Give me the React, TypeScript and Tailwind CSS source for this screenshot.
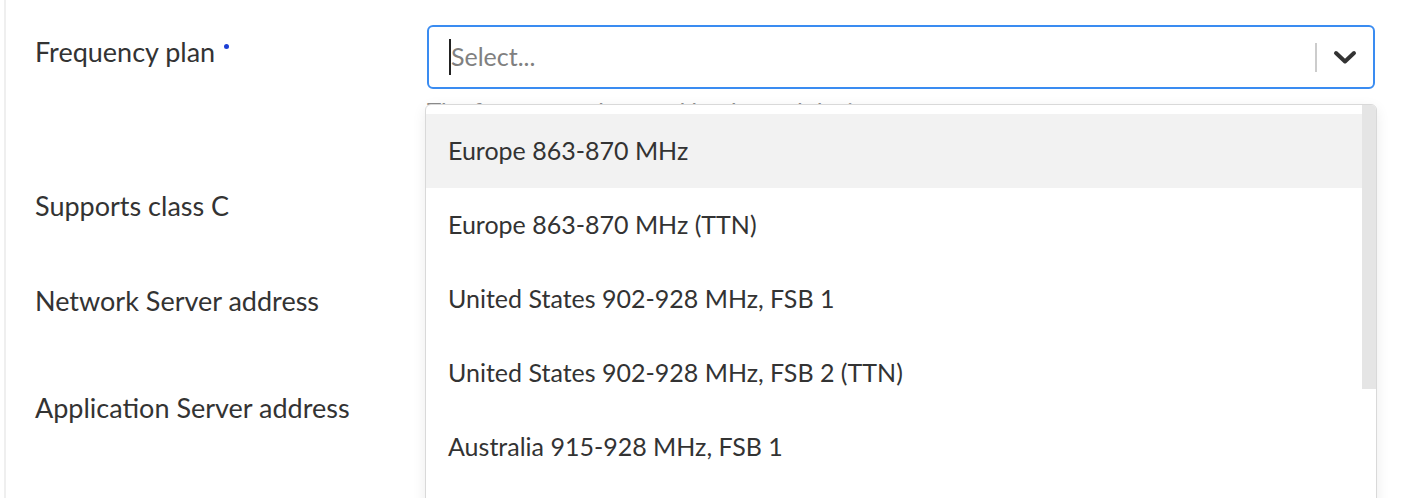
import React from "react";

const options = [
  "Europe 863-870 MHz",
  "Europe 863-870 MHz (TTN)",
  "United States 902-928 MHz, FSB 1",
  "United States 902-928 MHz, FSB 2 (TTN)",
  "Australia 915-928 MHz, FSB 1",
];

export default function App() {
  return (
    <div
      className="h-[498px] w-[1416px] overflow-hidden bg-white text-[#333]"
      style={{ fontFamily: "Lato, 'Open Sans', sans-serif" }}
    >
      <div className="ml-[4px] h-full border-l-2 border-[#efefef] pl-[29px] pt-[25px]">
        <div className="flex">
          <div className="flex w-[392px] items-start pt-[9px] text-[27px] leading-[36px]">
            <span>Frequency plan</span>
            <span className="ml-[9px] mt-[10px] h-[5px] w-[5px] rounded-full bg-[#1c3fd4]" />
          </div>
          <div className="relative w-[948px]">
            <div className="flex h-[64px] items-center rounded-[6px] border-2 border-[#3a8cf1] bg-white">
              <div className="flex flex-1 items-center pl-[20px]">
                <span className="h-[36px] w-[2px] bg-[#222]" />
                <span className="text-[25px] text-[#808080]">Select...</span>
              </div>
              <span className="h-[29px] w-[2px] bg-[#cccccc]" />
              <div className="flex w-[56px] items-center justify-center">
                <svg width="24" height="16" viewBox="0 0 24 16">
                  <polyline
                    points="3,4 12,12.5 21,4"
                    fill="none"
                    stroke="#333"
                    strokeWidth="4"
                    strokeLinecap="round"
                    strokeLinejoin="round"
                  />
                </svg>
              </div>
            </div>
            <div className="pt-[7px] text-[24px] leading-[30px] text-[#8c8c8c]">
              The frequency plan used by the end device
            </div>
            <div className="absolute left-[-2px] top-[79px] z-10 flex h-[420px] w-[952px] overflow-hidden rounded-[6px] border border-[#d9d9d9] bg-white shadow-[0_4px_14px_rgba(0,0,0,0.08)]">
              <div className="flex-1 pt-[9px]">
                {options.map((o, i) => (
                  <div
                    key={o}
                    className={`flex h-[74px] items-center pl-[22px] text-[25px] ${
                      i === 0 ? "bg-[#f2f2f2]" : ""
                    }`}
                  >
                    {o}
                  </div>
                ))}
              </div>
              <div className="w-[14px]">
                <div className="h-[284px] bg-[#e5e5e5]" />
              </div>
            </div>
          </div>
        </div>
        <div className="mt-[62px] text-[27px] leading-[36px]">Supports class C</div>
        <div className="mt-[59px] text-[27px] leading-[36px]">Network Server address</div>
        <div className="mt-[71px] text-[27px] leading-[36px]">Application Server address</div>
      </div>
    </div>
  );
}
